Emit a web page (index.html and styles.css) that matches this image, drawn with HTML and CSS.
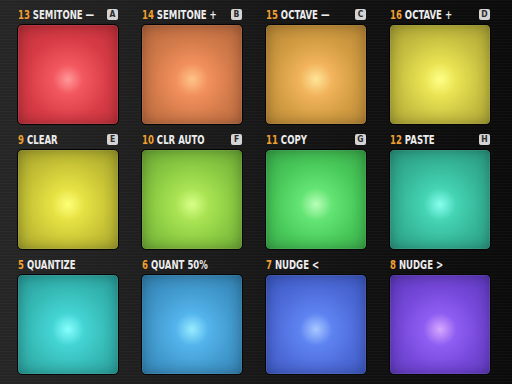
FILE: index.html
```html
<!DOCTYPE html>
<html lang="en">
<head>
    <meta charset="UTF-8">
    <meta name="viewport" content="width=device-width, initial-scale=1.0">
    <title>Pads</title>
    <link rel="stylesheet" href="styles.css">
</head>
<body>
    <!-- Pad grid: 4 x 3 -->
    <div class="pads">
        <div class="cell">
            <div class="head"><span class="label"><b>13</b> SEMITONE &mdash;</span><span class="key">A</span></div>
            <div class="pad red"></div>
        </div>
        <div class="cell">
            <div class="head"><span class="label"><b>14</b> SEMITONE +</span><span class="key">B</span></div>
            <div class="pad orange"></div>
        </div>
        <div class="cell">
            <div class="head"><span class="label"><b>15</b> OCTAVE &mdash;</span><span class="key">C</span></div>
            <div class="pad amber"></div>
        </div>
        <div class="cell">
            <div class="head"><span class="label"><b>16</b> OCTAVE +</span><span class="key">D</span></div>
            <div class="pad yellow"></div>
        </div>

        <div class="cell">
            <div class="head"><span class="label"><b>9</b> CLEAR</span><span class="key">E</span></div>
            <div class="pad lemon"></div>
        </div>
        <div class="cell">
            <div class="head"><span class="label"><b>10</b> CLR AUTO</span><span class="key">F</span></div>
            <div class="pad lime"></div>
        </div>
        <div class="cell">
            <div class="head"><span class="label"><b>11</b> COPY</span><span class="key">G</span></div>
            <div class="pad green"></div>
        </div>
        <div class="cell">
            <div class="head"><span class="label"><b>12</b> PASTE</span><span class="key">H</span></div>
            <div class="pad teal"></div>
        </div>

        <div class="cell">
            <div class="head"><span class="label"><b>5</b> QUANTIZE</span></div>
            <div class="pad cyan"></div>
        </div>
        <div class="cell">
            <div class="head"><span class="label"><b>6</b> QUANT 50%</span></div>
            <div class="pad sky"></div>
        </div>
        <div class="cell">
            <div class="head"><span class="label"><b>7</b> NUDGE &lt;</span></div>
            <div class="pad blue"></div>
        </div>
        <div class="cell">
            <div class="head"><span class="label"><b>8</b> NUDGE &gt;</span></div>
            <div class="pad violet"></div>
        </div>
    </div>
</body>
</html>
```

FILE: styles.css
```css
body {
    margin: 0;
    width: 512px;
    height: 384px;
    overflow: hidden;
    font-family: 'DejaVu Sans Condensed', 'DejaVu Sans', sans-serif;
    font-stretch: condensed;
    color: #ececec;
    background:
        repeating-linear-gradient(180deg, rgba(255, 255, 255, 0.025) 0 1px, rgba(0, 0, 0, 0) 1px 3px),
        linear-gradient(90deg, #262626 0%, #1b1b1b 40%, #111111 70%, #0b0b0b 100%);
}

/* Grid of pads */
.pads {
    display: grid;
    grid-template-columns: repeat(4, 102px);
    column-gap: 22px;
    padding-left: 17px;
}

.cell {
    display: flex;
    flex-direction: column;
}

.head {
    height: 24px;
    box-sizing: border-box;
    padding: 5px 1px 0 1px;
    display: flex;
    align-items: center;
}

.label {
    flex: 1;
    min-width: 0;
    font-size: 12.5px;
    font-weight: bold;
    white-space: nowrap;
    transform: scaleX(0.76);
    transform-origin: left center;
}
.label b {
    color: #f0a030;
}

.key {
    width: 11px;
    height: 11px;
    border-radius: 2px;
    background: #d4d4d4;
    color: #2a2a2a;
    font-size: 8.5px;
    font-weight: bold;
    line-height: 11px;
    text-align: center;
}

/* Pad look */
.pad {
    height: 101px;
    box-sizing: border-box;
    border-radius: 5px;
    border: 1px solid #050505;
    box-shadow: inset 0 0 0 1px rgba(255, 255, 255, 0.07), inset 0 0 14px rgba(0, 0, 0, 0.3);
}

.red    { background: radial-gradient(circle at 50% 55%, #ff9898 0%, #f35860 20%, #d83c46 55%, #bc2e38 100%); }
.orange { background: radial-gradient(circle at 50% 55%, #ffc488 0%, #f2905c 22%, #d27a4a 55%, #b4663c 100%); }
.amber  { background: radial-gradient(circle at 50% 55%, #ffe498 0%, #f2b45c 22%, #d29c42 55%, #b48434 100%); }
.yellow { background: radial-gradient(circle at 50% 55%, #ffff88 0%, #eae454 22%, #cac242 55%, #a69e32 100%); }
.lemon  { background: radial-gradient(circle at 50% 55%, #ffff78 0%, #e6e244 22%, #c8c436 55%, #a09e2c 100%); }
.lime   { background: radial-gradient(circle at 50% 55%, #d8ff88 0%, #aae454 22%, #8aca42 55%, #68a634 100%); }
.green  { background: radial-gradient(circle at 50% 55%, #b8ffb8 0%, #64e474 22%, #4aca5a 55%, #36a648 100%); }
.teal   { background: radial-gradient(circle at 50% 55%, #88fff0 0%, #44d4b4 22%, #36b698 55%, #28967e 100%); }
.cyan   { background: radial-gradient(circle at 50% 55%, #88ffff 0%, #44d4d4 22%, #36bab6 55%, #289a96 100%); }
.sky    { background: radial-gradient(circle at 50% 55%, #98ecff 0%, #54b4ec 22%, #429ace 55%, #307eae 100%); }
.blue   { background: radial-gradient(circle at 50% 55%, #a8c8ff 0%, #5e84f2 22%, #4e6cda 55%, #3a56be 100%); }
.violet { background: radial-gradient(circle at 50% 55%, #d8a8ff 0%, #8e5ef2 22%, #7648da 55%, #5a38ba 100%); }
```
